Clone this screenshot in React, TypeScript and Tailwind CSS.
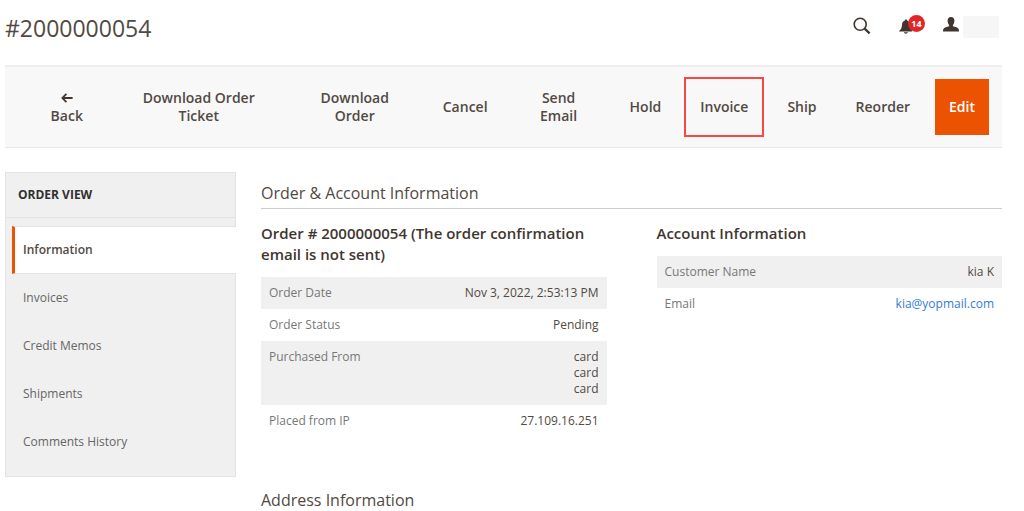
import type { ReactNode } from "react";

function SearchIcon() {
  return (
    <svg width="18" height="18" viewBox="0 0 18 18" fill="none" stroke="#41362f" aria-hidden="true">
      <circle cx="7.2" cy="7.2" r="6" strokeWidth="1.6" />
      <path d="M11.6 11.6 L16.6 16.4" strokeWidth="2.2" />
    </svg>
  );
}

function BellIcon() {
  return (
    <svg width="14" height="15" viewBox="0 0 14 15" fill="#41362f" aria-hidden="true">
      <path d="M7 .4c.8 0 1.2.5 1.2 1.2C10 2.200 10.900 3.800 11 6c.1 3.200.8 4.700 2.200 5.700v.8H.3v-.8C1.900 10.700 2.800 9.200 3 6c.1-2.200 1-3.800 2.800-4.400C5.800.9 6.200.4 7 .4z" />
      <path d="M4.800 13.300h4.200c-.2.8-1 1.400-2.100 1.400s-1.900-.6-2.100-1.400z" />
    </svg>
  );
}

function UserIcon() {
  return (
    <svg width="16" height="15" viewBox="0 0 16 15" fill="#41362f" aria-hidden="true">
      <path d="M8 0c2.300 0 3.400 1.400 3.400 3.700 0 1.900-.7 3.200-1.500 4.200v1.300c2.600.6 4.900 1.500 5.700 2.700.3.500.4 1.600.4 2.600H0c0-1 .1-2.100.4-2.600.8-1.200 3.100-2.100 5.700-2.700V7.900C5.300 6.900 4.600 5.600 4.600 3.700 4.600 1.400 5.700 0 8 0z" />
    </svg>
  );
}

function BackIcon() {
  return (
    <svg width="12" height="10" viewBox="0 0 12 10" fill="none" stroke="#41362f" strokeWidth="1.8" aria-hidden="true">
      <path d="M11.600 5H1.600M5.400.8L1.400 5l4 4.200" />
    </svg>
  );
}

const actions: { label: string; width?: string; highlighted?: boolean; primary?: boolean; back?: boolean }[] = [
  { label: "Back", width: "w-[78px]", back: true },
  { label: "Download Order Ticket", width: "w-[164px]" },
  { label: "Download Order", width: "w-[126px]" },
  { label: "Cancel" },
  { label: "Send Email", width: "w-[92px]" },
  { label: "Hold" },
  { label: "Invoice", highlighted: true },
  { label: "Ship" },
  { label: "Reorder" },
  { label: "Edit", primary: true },
];

const sections = ["Information", "Invoices", "Credit Memos", "Shipments", "Comments History"];

function InfoTable({ label, rows }: { label: string; rows: [string, ReactNode][] }) {
  return (
    <table aria-label={label} className="w-full text-xs leading-4">
      <tbody>
        {rows.map(([name, value]) => (
          <tr key={name} className="align-top odd:bg-[#f0f0f0]">
            <th scope="row" className="p-2 text-left font-normal text-[#777]">{name}</th>
            <td className="p-2 text-right text-[#514943]">{value}</td>
          </tr>
        ))}
      </tbody>
    </table>
  );
}

export default function App() {
  return (
    <div className="bg-white pr-[22px] pl-[5px] font-['Open_Sans',sans-serif] text-[#514943]">
      <header className="flex h-[65px] items-start justify-between">
        <h1 className="pt-3 text-[23px] leading-8">#2000000054</h1>
        <div className="flex items-start pt-4 pr-[3px]">
          <button type="button" aria-label="Search" className="mt-px mr-7">
            <SearchIcon />
          </button>
          <button type="button" aria-label="Notifications" className="relative mt-[3px] mr-[30px]">
            <BellIcon />
            <span className="absolute -top-1 left-[9px] flex size-[17px] items-center justify-center rounded-full bg-[#e22626] text-[9px] leading-none font-bold text-white">
              14
            </span>
          </button>
          <button type="button" aria-label="Account" className="flex items-start gap-1">
            <span className="mt-px"><UserIcon /></span>
            <span className="h-[22px] w-[36px] bg-[#f6f6f6]" />
          </button>
        </div>
      </header>

      <div className="flex items-stretch justify-end gap-[11px] border-t-2 border-b border-t-[#efefef] border-b-[#e8e8e8] bg-[#f8f8f8] pt-3 pr-[13px] pb-3">
        {actions.map((a) => (
          <button
            key={a.label}
            type="button"
            className={`flex flex-col items-center justify-center px-3.5 py-2.5 text-sm leading-[18px] font-semibold ${a.width ?? ""} ${
              a.primary ? "bg-[#eb5202] text-white" : "text-[#514943]"
            } ${a.highlighted ? "outline-2 outline-[#fb4646]" : ""}`}
          >
            {a.back && <span className="flex h-[18px] items-center"><BackIcon /></span>}
            {a.label}
          </button>
        ))}
      </div>

      <div className="flex items-start gap-[25px] pt-6">
        <nav aria-label="Order View" className="w-[231px] shrink-0 border border-[#e3e3e3] bg-[#f0f0f0] pb-2.5">
          <h2 className="mb-2 border-b border-[#e3e3e3] px-3 py-3.5 text-xs leading-4 font-bold text-[#303030]">
            ORDER VIEW
          </h2>
          <ul className="pl-1.5">
            {sections.map((s, i) => (
              <li key={s}>
                <a
                  href="#"
                  aria-current={i === 0 ? "page" : undefined}
                  className={`block pr-3 text-xs leading-4 ${
                    i === 0
                      ? "-mr-px border-y border-l-3 border-y-[#e3e3e3] border-l-[#eb5202] bg-white py-[15px] pl-2 font-semibold text-[#514943]"
                      : "py-4 pl-[11px] text-[#666]"
                  }`}
                >
                  {s}
                </a>
              </li>
            ))}
          </ul>
        </nav>

        <main className="min-w-0 flex-1">
          <section>
            <h2 className="border-b border-[#ccc] pt-2.5 pb-1 text-base leading-[22px]">Order &amp; Account Information</h2>
            <div className="grid grid-cols-2 gap-[50px] pt-3.5">
              <div>
                <h3 className="pb-3 text-[15px] leading-[21px] font-semibold text-[#41362f]">
                  Order # 2000000054 (The order confirmation email is not sent)
                </h3>
                <InfoTable
                  label="Order details"
                  rows={[
                    ["Order Date", "Nov 3, 2022, 2:53:13 PM"],
                    ["Order Status", "Pending"],
                    ["Purchased From", <>card<br />card<br />card</>],
                    ["Placed from IP", "27.109.16.251"],
                  ]}
                />
              </div>
              <div>
                <h3 className="pb-3 text-[15px] leading-[21px] font-semibold text-[#41362f]">Account Information</h3>
                <InfoTable
                  label="Account details"
                  rows={[
                    ["Customer Name", "kia K"],
                    ["Email", <a href="mailto:kia@yopmail.com" className="text-[#2f7ed8]">kia@yopmail.com</a>],
                  ]}
                />
              </div>
            </div>
          </section>
          <h2 className="pt-[52px] text-base leading-[22px]">Address Information</h2>
        </main>
      </div>
    </div>
  );
}
